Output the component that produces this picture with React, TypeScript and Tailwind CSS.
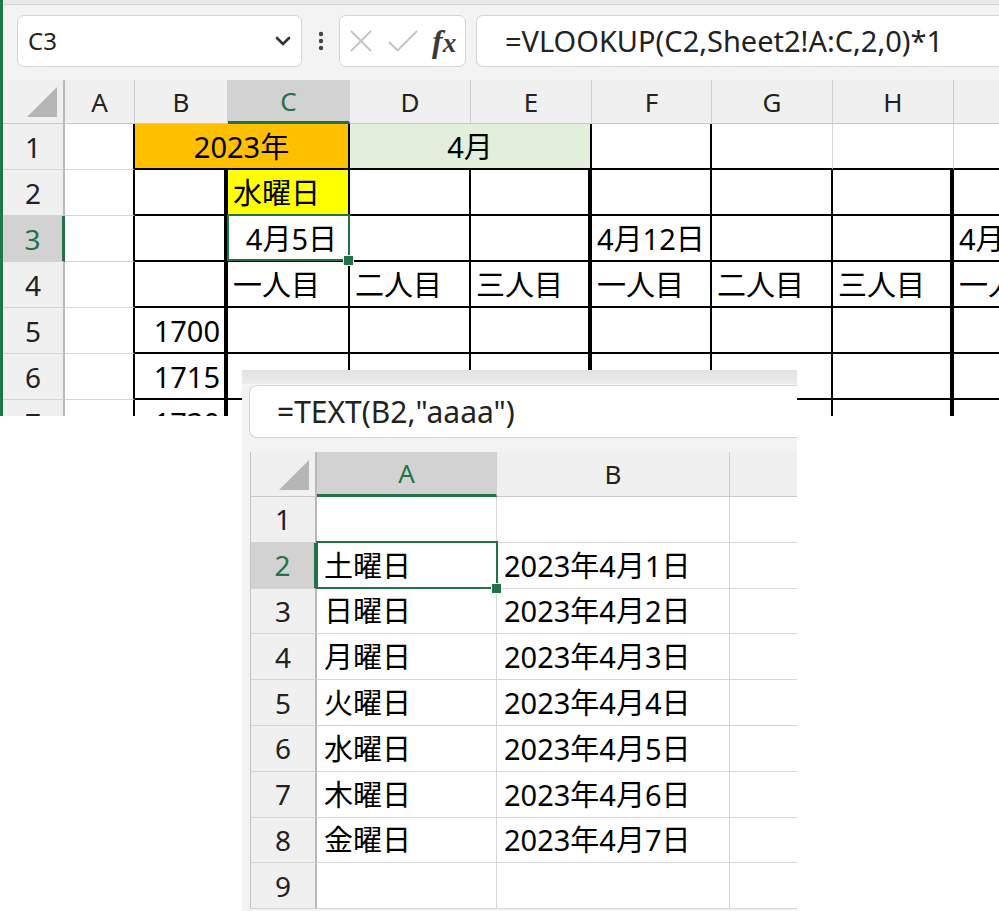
import React from "react";

type Edge = "none" | "gray" | "thin" | "thick";

interface CellDef {
  text?: string;
  span?: number;
  bg?: string;
  align?: "left" | "right" | "center";
  r: Edge;
  b: Edge;
  selected?: boolean;
  pad?: string;
}

const rightEdge: Record<Edge, string> = {
  none: "",
  gray: "border-r border-r-[#d6d6d6]",
  thin: "border-r-2 border-r-black",
  thick: "border-r-4 border-r-black",
};

const bottomEdge: Record<Edge, string> = {
  none: "",
  gray: "border-b border-b-[#d6d6d6]",
  thin: "border-b-2 border-b-black",
  thick: "border-b-4 border-b-black",
};

const cellFont = "font-['Noto_Sans','Noto_Sans_CJK_JP',sans-serif] text-[29px] leading-none text-black";
const colFont = "font-['Noto_Sans',sans-serif] text-[26px] leading-none";
const rowFont = "font-['Noto_Sans',sans-serif] text-[28px] leading-none";

function GridCell({ c }: { c: CellDef }) {
  const align =
    c.align === "right"
      ? "justify-end"
      : c.align === "center"
      ? "justify-center"
      : "justify-start";
  const pad = c.pad ?? (c.align === "right" ? "pr-[4px]" : c.align === "center" ? "" : "pl-[5px]");
  return (
    <div
      className={[
        "relative flex items-center whitespace-nowrap",
        c.span === 2 ? "col-span-2" : "",
        c.bg ?? "bg-white",
        rightEdge[c.r],
        bottomEdge[c.b],
        align,
        pad,
        cellFont,
      ].join(" ")}
    >
      {c.text}
      {c.selected && (
        <>
          <div className="pointer-events-none absolute -left-[1px] -top-[2px] -right-[2px] -bottom-[1px] z-10 border-2 border-[#217346]" />
          <div className="absolute -right-[6px] -bottom-[6px] z-20 h-[11px] w-[11px] border border-white bg-[#217346]" />
        </>
      )}
    </div>
  );
}

function Corner() {
  return (
    <div className="flex items-end justify-end border-r-2 border-b border-r-[#b9b9b9] border-b-[#c8c8c8] bg-[#f0f0f0] p-[6px]">
      <svg width="30" height="30" viewBox="0 0 30 30">
        <polygon points="30,0 30,30 0,30" fill="#b5b5b5" />
      </svg>
    </div>
  );
}

function ColHead({ label, active }: { label: string; active?: boolean }) {
  return (
    <div
      className={[
        "flex items-center justify-center border-r border-r-[#d0d0d0]",
        active
          ? "bg-[#d2d2d2] text-[#217346] border-b-[3px] border-b-[#217346]"
          : "bg-[#f0f0f0] text-[#222] border-b border-b-[#c8c8c8]",
        colFont,
      ].join(" ")}
    >
      {label}
    </div>
  );
}

function RowHead({ label, active }: { label: string; active?: boolean }) {
  return (
    <div
      className={[
        "flex items-center justify-center border-b border-b-[#d4d4d4]",
        active
          ? "bg-[#d2d2d2] text-[#217346] border-r-[3px] border-r-[#217346]"
          : "bg-[#f0f0f0] text-[#222] border-r-2 border-r-[#b9b9b9]",
        rowFont,
      ].join(" ")}
    >
      {label}
    </div>
  );
}

// top sheet: borders as drawn in the workbook
const baseRow: CellDef[] = [
  { r: "thin", b: "gray" },
  { r: "thick", b: "thin" },
  { r: "thin", b: "thin" },
  { r: "thin", b: "thin" },
  { r: "thick", b: "thin" },
  { r: "thin", b: "thin" },
  { r: "thin", b: "thin" },
  { r: "thick", b: "thin" },
  { r: "gray", b: "thin" },
];

const mkRow = (over: Record<number, Partial<CellDef>>) =>
  baseRow.map((c, i) => ({ ...c, ...over[i] }));

const topRows: CellDef[][] = [
  [
    { r: "thin", b: "gray" },
    { text: "2023年", span: 2, bg: "bg-[#ffc000]", align: "center", r: "thin", b: "thin" },
    { text: "4月", span: 2, bg: "bg-[#e2efda]", align: "center", r: "thin", b: "thin" },
    { r: "thin", b: "thin" },
    { r: "gray", b: "thin" },
    { r: "gray", b: "thin" },
    { r: "gray", b: "thin" },
  ],
  mkRow({ 2: { text: "水曜日", bg: "bg-[#ffff00]" } }),
  mkRow({
    2: { text: "4月5日", align: "right", selected: true, pad: "pr-[11px]" },
    5: { text: "4月12日" },
    8: { text: "4月19日" },
  }),
  mkRow({
    2: { text: "一人目" },
    3: { text: "二人目" },
    4: { text: "三人目" },
    5: { text: "一人目" },
    6: { text: "二人目" },
    7: { text: "三人目" },
    8: { text: "一人目" },
  }),
  mkRow({ 1: { text: "1700", align: "right" } }),
  mkRow({ 1: { text: "1715", align: "right" } }),
  mkRow({ 1: { text: "1730", align: "right" } }),
];

const weekDays: [string, string][] = [
  ["", ""],
  ["土曜日", "2023年4月1日"],
  ["日曜日", "2023年4月2日"],
  ["月曜日", "2023年4月3日"],
  ["火曜日", "2023年4月4日"],
  ["水曜日", "2023年4月5日"],
  ["木曜日", "2023年4月6日"],
  ["金曜日", "2023年4月7日"],
  ["", ""],
];

function TopSheet() {
  const cols = ["A", "B", "C", "D", "E", "F", "G", "H", ""];
  return (
    <div className="absolute left-0 top-0 h-[416px] w-[999px] overflow-hidden border-l-[3px] border-l-[#1d7a43] bg-[#f3f3f3]">
      <div className="h-[5px] border-b border-b-[#d6d6d6] bg-[#e9e9e9]" />
      <div className="flex h-[75px] items-start pt-[10px]">
        {/* name box */}
        <div className="ml-[14px] flex h-[52px] w-[285px] items-center justify-between rounded-[7px] border border-[#d4d4d4] bg-white pl-[10px] pr-[10px]">
          <span className="font-['Noto_Sans',sans-serif] text-[24px] text-[#222]">C3</span>
          <svg width="16" height="11" viewBox="0 0 16 11">
            <path d="M2 2 L8 8 L14 2" fill="none" stroke="#333" strokeWidth="2.6" strokeLinecap="round" strokeLinejoin="round" />
          </svg>
        </div>
        <div className="flex h-[52px] w-[37px] items-center justify-center">
          <svg width="6" height="20" viewBox="0 0 6 20">
            <circle cx="3" cy="3" r="2.2" fill="#444" />
            <circle cx="3" cy="10" r="2.2" fill="#444" />
            <circle cx="3" cy="17" r="2.2" fill="#444" />
          </svg>
        </div>
        {/* cancel / enter / fx */}
        <div className="flex h-[52px] w-[127px] items-center rounded-[7px] border border-[#d4d4d4] bg-white pl-[10px]">
          <svg width="22" height="22" viewBox="0 0 22 22">
            <path d="M1 1 L21 21 M21 1 L1 21" stroke="#c2c2c2" strokeWidth="1.8" />
          </svg>
          <svg className="ml-[16px]" width="30" height="22" viewBox="0 0 30 22">
            <path d="M1 12 L9.5 20.5 L29 1" fill="none" stroke="#c2c2c2" strokeWidth="1.8" />
          </svg>
          <span className="ml-[14px] font-['Liberation_Serif',serif] text-[32px] font-semibold italic leading-none text-[#3a3a3a]">
            f<span className="text-[27px]">x</span>
          </span>
        </div>
        {/* formula */}
        <div className="ml-[10px] flex h-[52px] flex-1 items-center rounded-l-[7px] border border-r-0 border-[#d4d4d4] bg-white pl-[28px]">
          <span className="whitespace-nowrap font-['Noto_Sans',sans-serif] text-[29px] text-[#222]">
            =VLOOKUP(C2,Sheet2!A:C,2,0)*1
          </span>
        </div>
      </div>

      <div className="grid grid-cols-[62px_70px_93px_122px_121px_121px_120px_121px_121px_60px] grid-rows-[44px_repeat(7,46px)]">
        <Corner />
        {cols.map((c, i) => (
          <ColHead key={i} label={c} active={c === "C"} />
        ))}
        {topRows.map((row, ri) => (
          <React.Fragment key={ri}>
            <RowHead label={String(ri + 1)} active={ri === 2} />
            {row.map((c, ci) => (
              <GridCell key={ci} c={c} />
            ))}
          </React.Fragment>
        ))}
      </div>
    </div>
  );
}

function LookupSheet() {
  return (
    <div className="absolute left-[242px] top-[370px] h-[541px] w-[555px] overflow-hidden bg-[#f3f3f3]">
      <div className="h-[15px] border-b border-b-[#f7f7f7] bg-gradient-to-b from-[#e2e2e2] to-[#ececec]" />
      <div className="ml-[7px] flex h-[53px] items-center rounded-l-[8px] border border-r-0 border-[#d4d4d4] bg-white pl-[27px]">
        <span className="whitespace-nowrap font-['Noto_Sans',sans-serif] text-[30px] text-[#222]">
          =TEXT(B2,&quot;aaaa&quot;)
        </span>
      </div>
      <div className="h-[14px]" />
      <div className="ml-[8px] grid grid-cols-[66px_180px_233px_80px] grid-rows-[45px_repeat(9,45.8px)] border-l border-l-[#c4c4c4]">
        <Corner />
        <ColHead label="A" active />
        <ColHead label="B" />
        <ColHead label="" />
        {weekDays.map(([a, b], ri) => (
          <React.Fragment key={ri}>
            <RowHead label={String(ri + 1)} active={ri === 1} />
            <GridCell c={{ text: a, r: "gray", b: "gray", selected: ri === 1, pad: "pl-[7px]" }} />
            <GridCell c={{ text: b, r: "gray", b: "gray", pad: "pl-[7px]" }} />
            <GridCell c={{ r: "gray", b: "gray" }} />
          </React.Fragment>
        ))}
      </div>
    </div>
  );
}

export default function App() {
  return (
    <div className="relative h-[911px] w-[999px] overflow-hidden bg-white">
      <TopSheet />
      <LookupSheet />
    </div>
  );
}
